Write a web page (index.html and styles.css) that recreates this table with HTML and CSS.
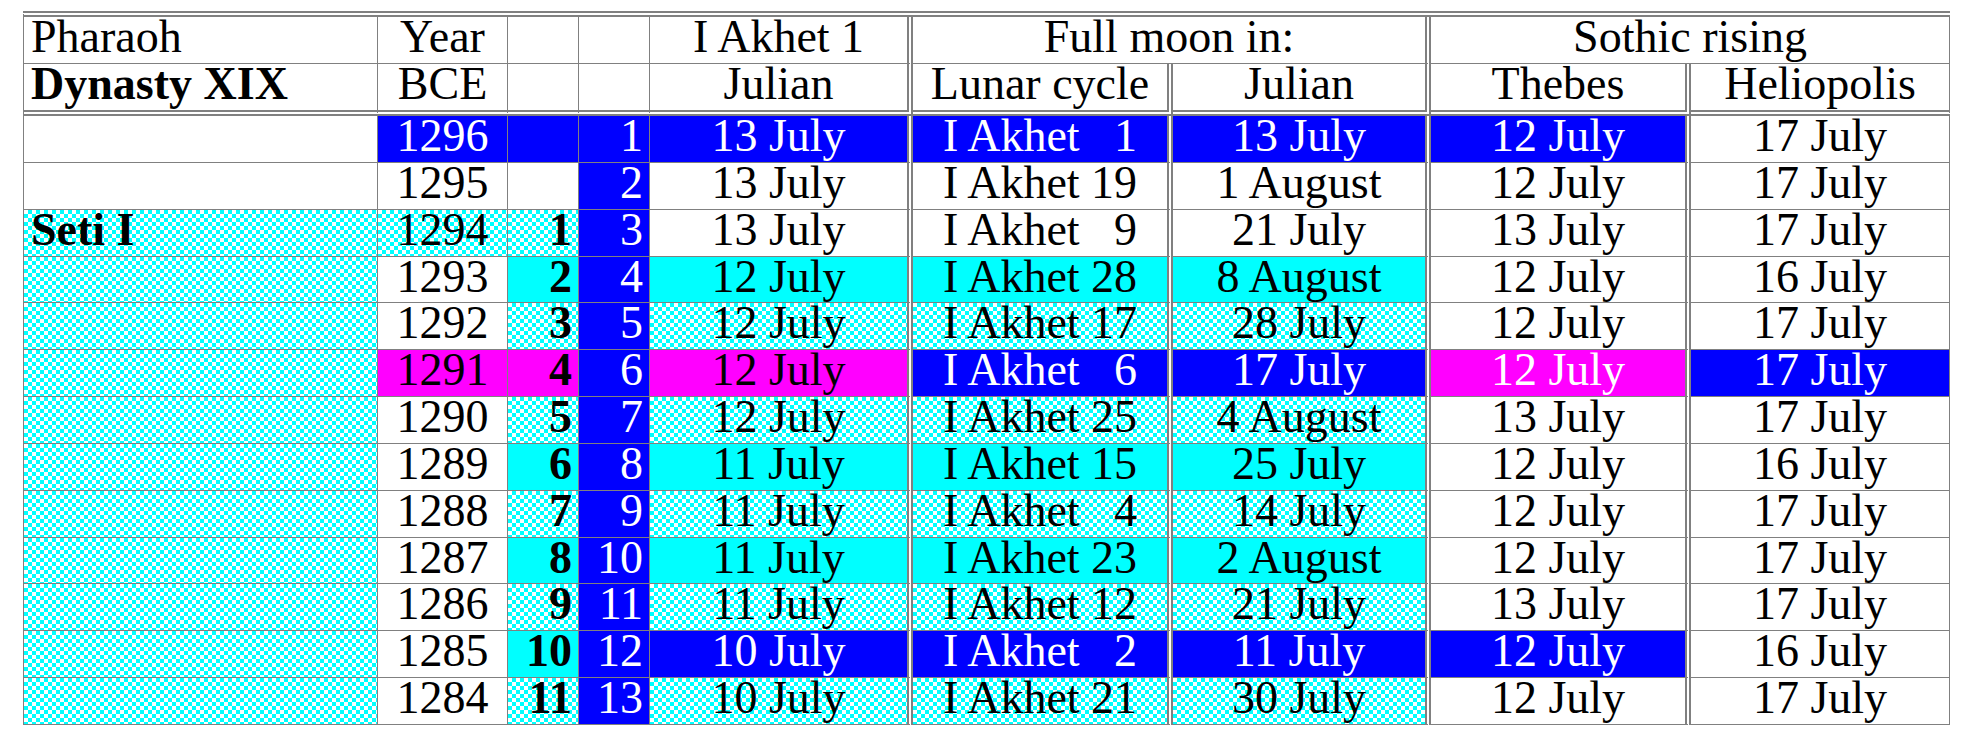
FILE: index.html
```html
<!DOCTYPE html>
<html lang="en">
<head>
<meta charset="utf-8">
<title>Seti I – Sothic and lunar dates</title>
<link rel="stylesheet" href="styles.css">
</head>
<body>
<div class="tbl">
  <div class="c l">Pharaoh</div>
  <div class="c ctr">Year</div>
  <div class="c"></div>
  <div class="c"></div>
  <div class="c ctr dr">I Akhet 1</div>
  <div class="c ctr dr span2">Full moon in:</div>
  <div class="c ctr span2">Sothic rising</div>

  <div class="c l hb bold">Dynasty XIX</div>
  <div class="c ctr hb">BCE</div>
  <div class="c hb"></div>
  <div class="c hb"></div>
  <div class="c ctr hb dr">Julian</div>
  <div class="c ctr hb dr">Lunar cycle</div>
  <div class="c ctr hb dr">Julian</div>
  <div class="c ctr hb dr">Thebes</div>
  <div class="c ctr hb">Heliopolis</div>

  <!-- 1296 -->
  <div class="c l"></div>
  <div class="c ctr b">1296</div>
  <div class="c r bold b"></div>
  <div class="c r b">1</div>
  <div class="c ctr dr b">13 July</div>
  <div class="c ctr dr b"><span class="ak">I Akhet <span class="n">1</span></span></div>
  <div class="c ctr dr b">13 July</div>
  <div class="c ctr dr b">12 July</div>
  <div class="c ctr">17 July</div>

  <!-- 1295 -->
  <div class="c l"></div>
  <div class="c ctr">1295</div>
  <div class="c r bold"></div>
  <div class="c r b">2</div>
  <div class="c ctr dr">13 July</div>
  <div class="c ctr dr"><span class="ak">I Akhet <span class="n">19</span></span></div>
  <div class="c ctr dr">1 August</div>
  <div class="c ctr dr">12 July</div>
  <div class="c ctr">17 July</div>

  <!-- 1294 -->
  <div class="c l bold pt">Seti I</div>
  <div class="c ctr pt">1294</div>
  <div class="c r bold pt">1</div>
  <div class="c r b">3</div>
  <div class="c ctr dr">13 July</div>
  <div class="c ctr dr"><span class="ak">I Akhet <span class="n">9</span></span></div>
  <div class="c ctr dr">21 July</div>
  <div class="c ctr dr">13 July</div>
  <div class="c ctr">17 July</div>

  <!-- 1293 -->
  <div class="c l pt"></div>
  <div class="c ctr">1293</div>
  <div class="c r bold cy">2</div>
  <div class="c r b">4</div>
  <div class="c ctr dr cy">12 July</div>
  <div class="c ctr dr cy"><span class="ak">I Akhet <span class="n">28</span></span></div>
  <div class="c ctr dr cy">8 August</div>
  <div class="c ctr dr">12 July</div>
  <div class="c ctr">16 July</div>

  <!-- 1292 -->
  <div class="c l pt"></div>
  <div class="c ctr">1292</div>
  <div class="c r bold pt">3</div>
  <div class="c r b">5</div>
  <div class="c ctr dr pt">12 July</div>
  <div class="c ctr dr pt"><span class="ak">I Akhet <span class="n">17</span></span></div>
  <div class="c ctr dr pt">28 July</div>
  <div class="c ctr dr">12 July</div>
  <div class="c ctr">17 July</div>

  <!-- 1291 -->
  <div class="c l pt"></div>
  <div class="c ctr mg">1291</div>
  <div class="c r bold mg">4</div>
  <div class="c r b">6</div>
  <div class="c ctr dr mg">12 July</div>
  <div class="c ctr dr b"><span class="ak">I Akhet <span class="n">6</span></span></div>
  <div class="c ctr dr b">17 July</div>
  <div class="c ctr dr mgw">12 July</div>
  <div class="c ctr b">17 July</div>

  <!-- 1290 -->
  <div class="c l pt"></div>
  <div class="c ctr">1290</div>
  <div class="c r bold pt">5</div>
  <div class="c r b">7</div>
  <div class="c ctr dr pt">12 July</div>
  <div class="c ctr dr pt"><span class="ak">I Akhet <span class="n">25</span></span></div>
  <div class="c ctr dr pt">4 August</div>
  <div class="c ctr dr">13 July</div>
  <div class="c ctr">17 July</div>

  <!-- 1289 -->
  <div class="c l pt"></div>
  <div class="c ctr">1289</div>
  <div class="c r bold cy">6</div>
  <div class="c r b">8</div>
  <div class="c ctr dr cy">11 July</div>
  <div class="c ctr dr cy"><span class="ak">I Akhet <span class="n">15</span></span></div>
  <div class="c ctr dr cy">25 July</div>
  <div class="c ctr dr">12 July</div>
  <div class="c ctr">16 July</div>

  <!-- 1288 -->
  <div class="c l pt"></div>
  <div class="c ctr">1288</div>
  <div class="c r bold pt">7</div>
  <div class="c r b">9</div>
  <div class="c ctr dr pt">11 July</div>
  <div class="c ctr dr pt"><span class="ak">I Akhet <span class="n">4</span></span></div>
  <div class="c ctr dr pt">14 July</div>
  <div class="c ctr dr">12 July</div>
  <div class="c ctr">17 July</div>

  <!-- 1287 -->
  <div class="c l pt"></div>
  <div class="c ctr">1287</div>
  <div class="c r bold cy">8</div>
  <div class="c r b">10</div>
  <div class="c ctr dr cy">11 July</div>
  <div class="c ctr dr cy"><span class="ak">I Akhet <span class="n">23</span></span></div>
  <div class="c ctr dr cy">2 August</div>
  <div class="c ctr dr">12 July</div>
  <div class="c ctr">17 July</div>

  <!-- 1286 -->
  <div class="c l pt"></div>
  <div class="c ctr">1286</div>
  <div class="c r bold pt">9</div>
  <div class="c r b">11</div>
  <div class="c ctr dr pt">11 July</div>
  <div class="c ctr dr pt"><span class="ak">I Akhet <span class="n">12</span></span></div>
  <div class="c ctr dr pt">21 July</div>
  <div class="c ctr dr">13 July</div>
  <div class="c ctr">17 July</div>

  <!-- 1285 -->
  <div class="c l pt"></div>
  <div class="c ctr">1285</div>
  <div class="c r bold cy">10</div>
  <div class="c r b">12</div>
  <div class="c ctr dr b">10 July</div>
  <div class="c ctr dr b"><span class="ak">I Akhet <span class="n">2</span></span></div>
  <div class="c ctr dr b">11 July</div>
  <div class="c ctr dr b">12 July</div>
  <div class="c ctr">16 July</div>

  <!-- 1284 -->
  <div class="c l pt"></div>
  <div class="c ctr">1284</div>
  <div class="c r bold pt">11</div>
  <div class="c r b">13</div>
  <div class="c ctr dr pt">10 July</div>
  <div class="c ctr dr pt"><span class="ak">I Akhet <span class="n">21</span></span></div>
  <div class="c ctr dr pt">30 July</div>
  <div class="c ctr dr">12 July</div>
  <div class="c ctr">17 July</div>
</div>
</body>
</html>
```
FILE: styles.css
```css
html, body {
  margin: 0;
  padding: 0;
  background: #ffffff;
}

body {
  padding: 11px 0 0 23px;
  font-family: "Liberation Serif", "Tinos", "Times New Roman", "DejaVu Serif", serif;
  color: #000;
}

.tbl {
  display: grid;
  width: max-content;
  grid-template-columns: 354px 130px 71px 71px 263px 260px 258px 260px 259px;
  grid-template-rows: 47px 52px repeat(13, 46.85px);
  border-left: 1px solid #808080;
  border-top: 6px double #808080;
  font-family: "Liberation Serif", "Tinos", "Times New Roman", "DejaVu Serif", serif;
}

.c {
  box-sizing: border-box;
  border-right: 1px solid #808080;
  border-bottom: 1px solid #808080;
  background-clip: padding-box;
  font-family: "Liberation Serif", "Tinos", "Times New Roman", "DejaVu Serif", serif;
  font-size: 46px;
  line-height: 40px;
  white-space: nowrap;
  overflow: visible;
  padding: 0;
}

.span2 { grid-column: span 2; }

.dr { border-right: 6px double #808080; }
.hb { border-bottom: 6px double #808080; }

.l { text-align: left; padding-left: 7px; }
.r { text-align: right; padding-right: 6px; }
.ctr { text-align: center; }
.bold { font-weight: bold; }

.b { background-color: #0000ff; color: #ffffff; }
.cy { background-color: #00ffff; }
.mg { background-color: #ff00ff; }
.mgw { background-color: #ff00ff; color: #ffffff; }
.pt {
  background-color: #ffffff;
  background-image: repeating-conic-gradient(#00ffff 0 25%, #ffffff 0 50%);
  background-size: 8px 8px;
}

.ak { display: inline-block; text-align: left; }
.ak .n { display: inline-block; width: 46px; text-align: right; }
```
